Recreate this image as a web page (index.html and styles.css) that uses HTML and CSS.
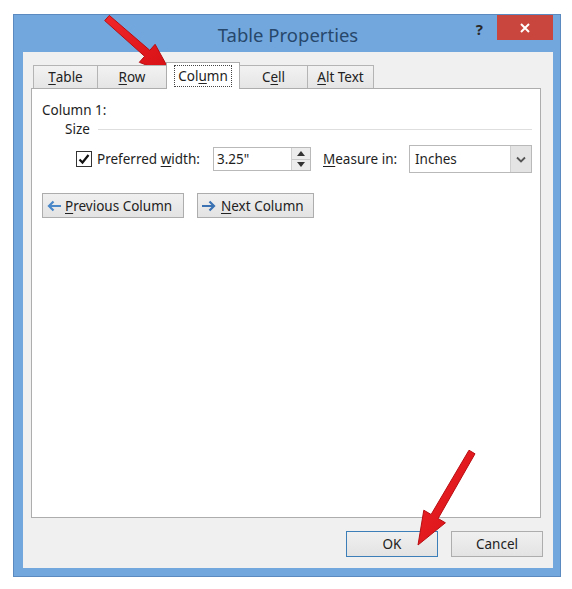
FILE: index.html
```html
<!DOCTYPE html>
<html>
<head>
<meta charset="utf-8">
<link rel="stylesheet" href="styles.css">
</head>
<body>
<div class="window">
  <div class="titlebar">
    <div></div>
    <div class="title">Table Properties</div>
    <div class="controls">
      <span class="help">?</span>
      <span class="close"><svg width="12" height="12" viewBox="0 0 12 12"><path d="M2 2 L10 10 M10 2 L2 10" stroke="#fff" stroke-width="2" fill="none"/></svg></span>
    </div>
  </div>
  <div class="client">
    <div class="tabs">
      <div class="tab w-table"><u>T</u>able</div>
      <div class="tab w-row"><u>R</u>ow</div>
      <div class="tab w-col active"><span class="focus">Col<u>u</u>mn</span></div>
      <div class="tab w-cell">C<u>e</u>ll</div>
      <div class="tab w-alt"><u>A</u>lt Text</div>
    </div>
    <div class="panel">
      <div class="col-label">Column 1:</div>
      <div class="size-row"><span>Size</span><span class="rule"></span></div>
      <div class="width-row">
        <span class="checkbox"><svg width="14" height="14" viewBox="0 0 14 14"><path d="M2.5 7.5 L5.5 10.5 L11.5 3" stroke="#111" stroke-width="2.2" fill="none"/></svg></span>
        <span class="lbl-width">Preferred <u>w</u>idth:</span>
        <span class="spin">
          <span class="spin-val">3.25"</span>
          <span class="spin-btns">
            <span class="sb"><svg width="8" height="5" viewBox="0 0 8 5"><path d="M0 5 L4 0 L8 5Z" fill="#333"/></svg></span>
            <span class="sb"><svg width="8" height="5" viewBox="0 0 8 5"><path d="M0 0 L4 5 L8 0Z" fill="#333"/></svg></span>
          </span>
        </span>
        <span class="lbl-measure"><u>M</u>easure in:</span>
        <span class="select">
          <span class="sel-val">Inches</span>
          <span class="sel-btn"><svg width="10" height="7" viewBox="0 0 10 7"><path d="M1 1.5 L5 5.5 L9 1.5" stroke="#555" stroke-width="1.8" fill="none"/></svg></span>
        </span>
      </div>
      <div class="nav-row">
        <div class="btn prev"><svg width="16" height="12" viewBox="0 0 16 12"><path d="M15 6 H3 M7.5 1.5 L3 6 L7.5 10.5" stroke="#4a88c9" stroke-width="2.2" fill="none"/></svg><span><u>P</u>revious Column</span></div>
        <div class="btn next"><svg width="16" height="12" viewBox="0 0 16 12"><path d="M1 6 H13 M8.5 1.5 L13 6 L8.5 10.5" stroke="#3b72b3" stroke-width="2.2" fill="none"/></svg><span><u>N</u>ext Column</span></div>
      </div>
    </div>
    <div class="footer">
      <div class="btn fbtn default">OK</div>
      <div class="btn fbtn">Cancel</div>
    </div>
  </div>
</div>
<svg class="arrows" width="572" height="589" viewBox="0 0 572 589">
  <defs>
    <linearGradient id="ar" x1="0" y1="0" x2="1" y2="1">
      <stop offset="0" stop-color="#f0262a"/>
      <stop offset="1" stop-color="#d50f14"/>
    </linearGradient>
  </defs>
  <polygon points="109.3,15.4 149.8,50.3 155.1,44.3 172,75 139.3,62.3 144.6,56.3 104.7,20.6" fill="url(#ar)" stroke="#b80d11" stroke-width="1" stroke-linejoin="round"/>
  <polygon points="475,453.8 438.1,518.5 445.4,522.8 418,545 423.8,510.2 431.1,514.5 469,450.2" fill="url(#ar)" stroke="#b80d11" stroke-width="1" stroke-linejoin="round"/>
</svg>
</body>
</html>
```
FILE: styles.css
```css
html, body {
  margin: 0;
  padding: 0;
  background: #ffffff;
}
body {
  font-family: "Noto Sans", "Open Sans", sans-serif;
  font-size: 13.5px;
  color: #1e1e1e;
  position: relative;
  width: 572px;
  height: 589px;
  overflow: hidden;
}
u { text-decoration: underline; text-underline-offset: 2px; }

.window {
  margin: 14px 0 0 13px;
  width: 548px;
  height: 563px;
  box-sizing: border-box;
  background: #72a7de;
  border: 1px solid #5b8ac0;
  padding: 0 7px 8px 9px;
  display: flex;
  flex-direction: column;
}
.titlebar {
  height: 37px;
  display: grid;
  grid-template-columns: 1fr auto 1fr;
  align-items: start;
}
.title {
  font-size: 18.5px;
  color: #27476b;
  line-height: 37px;
  padding-top: 1px;
}
.controls {
  display: flex;
  justify-content: flex-end;
  align-items: flex-start;
}
.help {
  font-weight: bold;
  font-size: 15px;
  color: #2a2a2a;
  margin: 5px 14px 0 0;
  line-height: 18px;
}
.close {
  width: 56px;
  height: 25px;
  background: #c9463e;
  display: flex;
  align-items: center;
  justify-content: center;
}

.client {
  flex: 1;
  background: #f0f0f0;
  padding: 10px 10px 11px 8px;
  display: flex;
  flex-direction: column;
}
.tabs {
  display: flex;
  align-items: flex-end;
  height: 26px;
  padding-left: 2px;
  position: relative;
  z-index: 1;
}
.tab {
  box-sizing: border-box;
  height: 23px;
  border: 1px solid #b4b4b4;
  border-bottom: none;
  background: linear-gradient(#f2f2f2, #e5e5e5);
  margin-left: -1px;
  display: flex;
  align-items: center;
  justify-content: center;
  font-size: 13.5px;
  color: #222;
}
.w-table { width: 65px; margin-left: 0; }
.w-row { width: 70px; }
.w-col { width: 74px; }
.w-cell { width: 69px; }
.w-alt { width: 67px; }
.tab.active {
  height: 27px;
  background: #ffffff;
  margin-bottom: -1px;
  border-color: #adadad;
  align-items: flex-start;
  padding-top: 2px;
}
.focus {
  border: 1px dotted #444;
  padding: 0 3px;
  line-height: 20px;
  height: 20px;
  display: block;
}

.panel {
  height: 430px;
  box-sizing: border-box;
  background: #ffffff;
  border: 1px solid #adadad;
  margin-right: 2px;
  padding: 12px 8px 0 10px;
}
.col-label {
  line-height: 18px;
  height: 18px;
}
.size-row {
  margin-left: 23px;
  height: 18px;
  display: flex;
  align-items: center;
  margin-top: 1px;
}
.rule {
  flex: 1;
  border-top: 1px solid #dedede;
  margin-left: 8px;
}
.width-row {
  margin-top: 7px;
  height: 28px;
  display: flex;
  align-items: center;
  padding-left: 34px;
}
.checkbox {
  width: 16px;
  height: 16px;
  box-sizing: border-box;
  border: 1px solid #333;
  background: #fff;
  display: flex;
  align-items: center;
  justify-content: center;
  margin-right: 5px;
}
.lbl-width { width: 116px; }
.spin {
  width: 98px;
  height: 24px;
  box-sizing: border-box;
  border: 1px solid #b9b9b9;
  display: flex;
}
.spin-val {
  flex: 1;
  padding-left: 3px;
  line-height: 22px;
}
.spin-btns {
  width: 18px;
  display: flex;
  flex-direction: column;
  border-left: 1px solid #d0d0d0;
  background: #ececec;
}
.sb {
  flex: 1;
  display: flex;
  align-items: center;
  justify-content: center;
}
.sb + .sb { border-top: 1px solid #c9c9c9; }
.lbl-measure {
  margin-left: 12px;
  width: 86px;
}
.select {
  width: 123px;
  height: 28px;
  box-sizing: border-box;
  border: 1px solid #b9b9b9;
  display: flex;
}
.sel-val {
  flex: 1;
  padding-left: 5px;
  line-height: 26px;
}
.sel-btn {
  width: 20px;
  background: #e4e4e4;
  border-left: 1px solid #cfcfcf;
  display: flex;
  align-items: center;
  justify-content: center;
}
.nav-row {
  margin-top: 20px;
  display: flex;
  gap: 13px;
}
.btn {
  box-sizing: border-box;
  height: 25px;
  border: 1px solid #adadad;
  background: linear-gradient(#f0f0f0, #e3e3e3);
  display: flex;
  align-items: center;
  color: #222;
}
.prev { width: 142px; padding-left: 3px; gap: 3px; }
.next { width: 117px; padding-left: 3px; gap: 4px; }
.footer {
  margin-top: 13px;
  display: flex;
  justify-content: flex-end;
  gap: 13px;
}
.fbtn {
  width: 92px;
  height: 26px;
  justify-content: center;
}
.fbtn.default { border-color: #3c7fb8; }

.arrows {
  position: absolute;
  left: 0;
  top: 0;
  pointer-events: none;
}
```
